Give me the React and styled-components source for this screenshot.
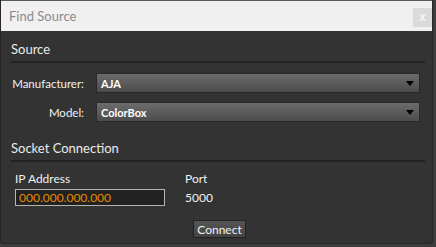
import React from "react";
import styled, { createGlobalStyle } from "styled-components";

const GlobalStyle = createGlobalStyle`
  html, body {
    margin: 0;
    padding: 0;
    background: #3c3c3c;
    font-family: "Lato", "Noto Sans", sans-serif;
  }
`;

const Window = styled.div`
  width: 433px;
  height: 244px;
  box-sizing: border-box;
  background: #333333;
  border: 1px solid #262626;
  border-top: none;
  border-radius: 0 0 4px 4px;
  display: flex;
  flex-direction: column;
  overflow: hidden;
`;

const TitleBar = styled.div`
  height: 31px;
  flex-shrink: 0;
  background: #f0f0f0;
  border-top: 1px solid #5a5a5a;
  box-sizing: border-box;
  display: flex;
  align-items: center;
  justify-content: space-between;
  padding-left: 8px;
`;

const Title = styled.span`
  font-size: 13px;
  color: #8a8a8a;
`;

const CloseButton = styled.button`
  width: 19px;
  height: 19px;
  margin-top: 2px;
  padding: 0;
  border: none;
  background: #dadada;
  color: #f4f4f4;
  font-family: "Liberation Sans", sans-serif;
  font-size: 12px;
  font-weight: bold;
  line-height: 19px;
  cursor: pointer;
`;

const Body = styled.div`
  padding: 0 7px 0 10px;
  display: flex;
  flex-direction: column;
`;

const SectionHeader = styled.div`
  font-size: 13px;
  line-height: 18px;
  color: #ececec;
  padding-bottom: 3px;
  border-bottom: 2px solid #222222;
  margin-top: ${(p) => p.$top}px;
`;

const FormGrid = styled.div`
  display: grid;
  grid-template-columns: 73px 324px;
  column-gap: 12px;
  row-gap: 9px;
  margin-top: 10px;
  align-items: center;
`;

const FieldLabel = styled.label`
  font-size: 11.5px;
  color: #f2f2f2;
  text-align: right;
  padding-right: ${(p) => p.$pad || 0}px;
`;

const Select = styled.div`
  height: 20px;
  box-sizing: border-box;
  border: 1px solid #2a2a2a;
  background: linear-gradient(#6c6c6c, #4c4c4c);
  display: flex;
  align-items: center;
  justify-content: space-between;
  padding: 1px 4px 0 4px;
  font-size: 11px;
  font-weight: 700;
  color: #ffffff;
`;

const Arrow = styled.span`
  width: 0;
  height: 0;
  border-left: 4px solid transparent;
  border-right: 4px solid transparent;
  border-top: 5px solid #000000;
  margin-right: 1px;
`;

const SocketRow = styled.div`
  display: flex;
  gap: 20px;
  margin-top: 9px;
  padding-left: 4px;
`;

const Column = styled.div`
  display: flex;
  flex-direction: column;
  gap: 2px;
`;

const SmallLabel = styled.div`
  font-size: 12px;
  line-height: 16px;
  color: #f2f2f2;
`;

const PortValue = styled.div`
  height: 17px;
  display: flex;
  align-items: center;
  font-size: 12px;
  color: #f2f2f2;
`;

const IpInput = styled.input`
  width: 150px;
  height: 17px;
  box-sizing: border-box;
  background: #222222;
  border: 1px solid #b4b4b4;
  padding: 0 0 0 3px;
  font-family: "Lato", "Noto Sans", sans-serif;
  font-size: 12px;
  color: #e88a00;
  outline: none;
`;

const Footer = styled.div`
  display: flex;
  justify-content: center;
  margin-top: 14px;
  padding-left: 3px;
`;

const Button = styled.button`
  height: 18px;
  padding: 0 3px;
  box-sizing: border-box;
  border: 1px solid #222222;
  background: linear-gradient(#555555, #444444);
  color: #f2f2f2;
  font-family: "Lato", "Noto Sans", sans-serif;
  font-size: 12px;
  line-height: 15px;
  cursor: pointer;
`;

export default function App() {
  return (
    <>
      <GlobalStyle />
      <Window>
        <TitleBar>
          <Title>Find Source</Title>
          <CloseButton>x</CloseButton>
        </TitleBar>
        <Body>
          <SectionHeader $top={9}>Source</SectionHeader>
          <FormGrid>
            <FieldLabel>Manufacturer:</FieldLabel>
            <Select>
              AJA
              <Arrow />
            </Select>
            <FieldLabel $pad={0}>Model:</FieldLabel>
            <Select>
              ColorBox
              <Arrow />
            </Select>
          </FormGrid>
          <SectionHeader $top={17}>Socket Connection</SectionHeader>
          <SocketRow>
            <Column>
              <SmallLabel>IP Address</SmallLabel>
              <IpInput defaultValue="000.000.000.000" />
            </Column>
            <Column>
              <SmallLabel>Port</SmallLabel>
              <PortValue>5000</PortValue>
            </Column>
          </SocketRow>
          <Footer>
            <Button>Connect</Button>
          </Footer>
        </Body>
      </Window>
    </>
  );
}
